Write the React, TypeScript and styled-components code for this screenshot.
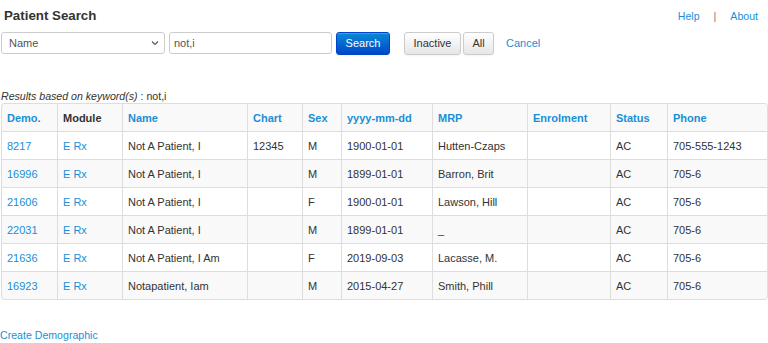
import React from "react";
import styled, { createGlobalStyle } from "styled-components";

const GlobalStyle = createGlobalStyle`
  html, body {
    margin: 0;
    padding: 0;
    background: #ffffff;
  }
  body {
    font-family: "Liberation Sans", Arial, sans-serif;
    font-size: 11px;
    color: #333333;
  }
`;

const Page = styled.div`
  width: 768px;
  height: 343px;
  overflow: hidden;
  display: flex;
  flex-direction: column;
`;

const Header = styled.div`
  display: flex;
  justify-content: space-between;
  align-items: center;
  height: 31px;
  padding: 0 10px 0 4px;
`;

const Title = styled.h1`
  margin: 0;
  font-size: 13.3px;
  font-weight: bold;
  color: #333;
`;

const TopLinks = styled.div`
  display: flex;
  align-items: center;
  gap: 14px;
  padding-top: 1px;
  font-size: 10.6px;
`;

const Link = styled.a`
  color: #1a8fd6;
  text-decoration: none;
  cursor: pointer;
`;

const Sep = styled.span`
  color: #777;
`;

const Toolbar = styled.div`
  display: flex;
  align-items: center;
  height: 24px;
  padding-left: 1px;
`;

const SelectBox = styled.div`
  position: relative;
  box-sizing: border-box;
  width: 164px;
  height: 22px;
  border: 1px solid #cccccc;
  border-radius: 3px;
  display: flex;
  align-items: center;
  padding-left: 7px;
  color: #555;
  background: #fff;
`;

const Chevron = styled.svg`
  position: absolute;
  right: 5px;
  top: 7px;
`;

const Input = styled.div`
  box-sizing: border-box;
  width: 163px;
  height: 22px;
  margin-left: 4px;
  border: 1px solid #cccccc;
  border-radius: 3px;
  display: flex;
  align-items: center;
  padding-left: 4px;
  color: #555;
`;

const Button = styled.button<{ $primary?: boolean; $w: number; $ml: number }>`
  box-sizing: border-box;
  width: ${(p) => p.$w}px;
  height: 23px;
  margin-left: ${(p) => p.$ml}px;
  padding: 0;
  font-family: inherit;
  font-size: 11px;
  border-radius: 3px;
  border: 1px solid ${(p) => (p.$primary ? "#0044cc" : "#cccccc")};
  color: ${(p) => (p.$primary ? "#ffffff" : "#333333")};
  background: ${(p) =>
    p.$primary
      ? "linear-gradient(#0a8ad6, #0046c8)"
      : "linear-gradient(#ffffff, #e6e6e6)"};
  box-shadow: inset 0 1px 0 rgba(255, 255, 255, 0.2), 0 1px 2px rgba(0, 0, 0, 0.05);
`;

const CancelLink = styled(Link)`
  margin-left: 12px;
`;

const Results = styled.div`
  margin-top: 34px;
  height: 14px;
  line-height: 14px;
  padding-left: 1px;
  font-size: 10.6px;
  font-style: italic;
`;

const Keyword = styled.span`
  font-style: normal;
`;

const Table = styled.table`
  margin: 0 0 0 1px;
  width: 767px;
  table-layout: fixed;
  border-collapse: separate;
  border-spacing: 0;
  border: 1px solid #dddddd;
  border-left: 0;
  border-radius: 4px;
  font-size: 11px;
`;

const Row = styled.tr`
  &:nth-child(odd) td,
  &:nth-child(odd) th {
    background: #f9f9f9;
  }
  &:first-child th:first-child {
    border-top-left-radius: 4px;
  }
  &:first-child th:last-child {
    border-top-right-radius: 4px;
  }
  &:last-child td:first-child {
    border-bottom-left-radius: 4px;
  }
  &:last-child td:last-child {
    border-bottom-right-radius: 4px;
  }
`;

const Th = styled.th<{ $link?: boolean }>`
  text-align: left;
  font-weight: bold;
  height: 27px;
  padding: 0 5px;
  color: ${(p) => (p.$link ? "#1a8fd6" : "#333333")};
  border-left: 1px solid #dddddd;
  white-space: nowrap;
`;

const Td = styled.td`
  height: 27px;
  padding: 0 5px;
  border-left: 1px solid #dddddd;
  border-top: 1px solid #dddddd;
  white-space: nowrap;
  overflow: hidden;
`;

const Footer = styled.div`
  margin-top: 29px;
  font-size: 10.6px;
`;

const columns: { label: string; width: number; link: boolean }[] = [
  { label: "Demo.", width: 56, link: true },
  { label: "Module", width: 65, link: false },
  { label: "Name", width: 125, link: true },
  { label: "Chart", width: 55, link: true },
  { label: "Sex", width: 39, link: true },
  { label: "yyyy-mm-dd", width: 91, link: true },
  { label: "MRP", width: 95, link: true },
  { label: "Enrolment", width: 83, link: true },
  { label: "Status", width: 57, link: true },
  { label: "Phone", width: 100, link: true },
];

const patients = [
  ["8217", "Not A Patient, I", "12345", "M", "1900-01-01", "Hutten-Czaps", "", "AC", "705-555-1243"],
  ["16996", "Not A Patient, I", "", "M", "1899-01-01", "Barron, Brit", "", "AC", "705-6"],
  ["21606", "Not A Patient, I", "", "F", "1900-01-01", "Lawson, Hill", "", "AC", "705-6"],
  ["22031", "Not A Patient, I", "", "M", "1899-01-01", "_", "", "AC", "705-6"],
  ["21636", "Not A Patient, I Am", "", "F", "2019-09-03", "Lacasse, M.", "", "AC", "705-6"],
  ["16923", "Notapatient, Iam", "", "M", "2015-04-27", "Smith, Phill", "", "AC", "705-6"],
];

const App: React.FC = () => {
  return (
    <>
      <GlobalStyle />
      <Page>
        <Header>
          <Title>Patient Search</Title>
          <TopLinks>
            <Link>Help</Link>
            <Sep>|</Sep>
            <Link>About</Link>
          </TopLinks>
        </Header>
        <Toolbar>
          <SelectBox>
            Name
            <Chevron width="8" height="6" viewBox="0 0 8 6">
              <path d="M1 1.5 L4 4.5 L7 1.5" fill="none" stroke="#555" strokeWidth="1.1" />
            </Chevron>
          </SelectBox>
          <Input>not,i</Input>
          <Button $primary $w={54} $ml={4}>
            Search
          </Button>
          <Button $w={57} $ml={14}>
            Inactive
          </Button>
          <Button $w={31} $ml={2}>
            All
          </Button>
          <CancelLink>Cancel</CancelLink>
        </Toolbar>
        <Results>
          Results based on keyword(s) <Keyword>: not,i</Keyword>
        </Results>
        <Table>
          <colgroup>
            {columns.map((c) => (
              <col key={c.label} style={{ width: c.width }} />
            ))}
          </colgroup>
          <tbody>
            <Row>
              {columns.map((c) => (
                <Th key={c.label} $link={c.link}>
                  {c.label}
                </Th>
              ))}
            </Row>
            {patients.map((p) => (
              <Row key={p[0]}>
                <Td>
                  <Link>{p[0]}</Link>
                </Td>
                <Td>
                  <Link>E Rx</Link>
                </Td>
                {p.slice(1).map((v, i) => (
                  <Td key={i}>{v}</Td>
                ))}
              </Row>
            ))}
          </tbody>
        </Table>
        <Footer>
          <Link>Create Demographic</Link>
        </Footer>
      </Page>
    </>
  );
};

export default App;
